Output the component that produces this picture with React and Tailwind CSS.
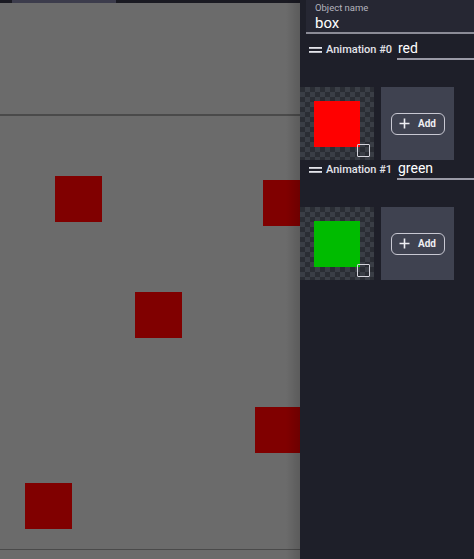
import React from 'react'

const squares = [
  { x: 55, y: 176 },
  { x: 263, y: 180 },
  { x: 135, y: 292 },
  { x: 255, y: 407 },
  { x: 25, y: 483 },
]

const animations = [
  { name: 'red', color: 'bg-[#ff0000]' },
  { name: 'green', color: 'bg-[#00bb00]' },
]

const Burger = () => (
  <svg width="13" height="8" viewBox="0 0 13 8" className="shrink-0">
    <rect x="0" y="1" width="13" height="1.8" fill="#e4e4ea" />
    <rect x="0" y="5" width="13" height="1.8" fill="#e4e4ea" />
  </svg>
)

const AnimationBlock = ({ index, name, color }) => (
  <div className="flex flex-col">
    <div className="flex h-[20px] items-center pl-[9px]">
      <Burger />
      <span className="ml-[4px] w-[71px] whitespace-nowrap text-[11px] font-medium text-[#e4e4ea]">
        Animation #{index}
      </span>
      <div className="flex h-[20px] flex-1 items-end border-b-2 border-[#9a9aa6] pl-[1px]">
        <span className="pb-[1px] text-[14px] leading-[18px] text-white">{name}</span>
      </div>
    </div>
    <div className="mt-[27px] flex gap-[7px]">
      <div className="relative h-[73px] w-[74px] bg-[conic-gradient(#3a3e46_25%,#2a2d34_0_50%,#3a3e46_0_75%,#2a2d34_0)] bg-size-[10px_10px]">
        <div className={`absolute left-[14px] top-[14px] h-[46px] w-[46px] ${color}`} />
        <div className="absolute bottom-[3px] right-[4px] h-[13px] w-[13px] rounded-[1px] border-[1.5px] border-[#d4d4dc]" />
      </div>
      <div className="flex h-[73px] w-[73px] items-center justify-center bg-[#3f4250]">
        <button className="flex h-[22px] w-[54px] items-center justify-center gap-[8px] rounded-[6px] border-[1.5px] border-[#c8c8d2] text-[10px] font-bold text-[#eeeef2]">
          <svg width="11" height="11" viewBox="0 0 11 11">
            <path d="M5.5 0.5v10M0.5 5.5h10" stroke="#eeeef2" strokeWidth="1.6" />
          </svg>
          Add
        </button>
      </div>
    </div>
  </div>
)

export default function App() {
  return (
    <div className="flex h-[559px] w-[474px] overflow-hidden font-['Roboto',sans-serif]">
      <div className="relative flex w-[300px] flex-col overflow-hidden bg-[#6b6b6b]">
        <div className="flex h-[3px] bg-[#1a1a22]">
          <div className="ml-[12px] w-[104px] bg-[#3c3c4c]" />
        </div>
        <div className="h-[111px]" />
        <div className="h-[1.5px] bg-[#4a4a4a]" />
        <div className="flex-1" />
        <div className="mb-[9px] h-[1.5px] bg-[#4a4a4a]" />
        {squares.map((s, i) => (
          <div
            key={i}
            className="absolute h-[46px] w-[47px] bg-[#800000]"
            style={{ left: s.x, top: s.y }}
          />
        ))}
        <div className="pointer-events-none absolute right-0 top-0 h-full w-[14px] bg-gradient-to-r from-transparent to-black/15" />
      </div>
      <div className="flex w-[174px] flex-col bg-[#1e1f29]">
        <div className="ml-[6px] flex h-[34px] flex-col border-b-2 border-[#8b8b96] bg-[#262733] pl-[9px]">
          <span className="mt-[2px] text-[9.5px] leading-[12px] text-[#b4b4bd]">Object name</span>
          <span className="mt-[1px] text-[15px] leading-[16px] text-white">box</span>
        </div>
        <div className="mt-[6px] flex flex-col">
          {animations.map((a, i) => (
            <AnimationBlock key={i} index={i} name={a.name} color={a.color} />
          ))}
        </div>
      </div>
    </div>
  )
}
